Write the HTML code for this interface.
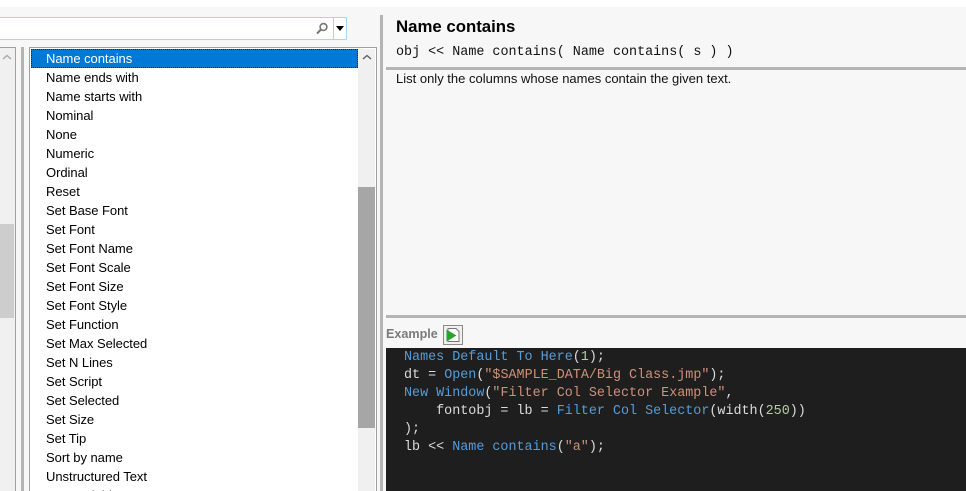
<!DOCTYPE html>
<html><head><meta charset="utf-8"><style>
html,body{margin:0;padding:0;width:966px;height:491px;overflow:hidden;background:#f7f7f7}
body{position:relative;font-family:"Liberation Sans",sans-serif;color:#111}
.a{position:absolute}
.it{position:absolute;left:46px;font-size:13px;line-height:19px;height:19px;white-space:nowrap;letter-spacing:-.04px;color:#000}
.m{font-family:"Liberation Mono",monospace;white-space:pre;position:absolute}
.c{font-size:13.4px;line-height:18px;left:404px;color:#dcdcdc}
.b{color:#569cd6}.s{color:#ce9178}.n{color:#b5cea8}
</style></head><body>
<div class="a" style="left:0;top:0;width:966px;height:7px;background:#fff"></div>
<div class="a" style="left:0;top:17px;width:346px;height:21px;background:#fff;border:1px solid #a9d6ee;border-left:0"></div>
<div class="a" style="left:333px;top:18px;width:1px;height:21px;background:#a9d6ee"></div>
<svg class="a" style="left:315px;top:21px" width="15" height="15" viewBox="0 0 15 15"><circle cx="8.5" cy="6" r="3.4" fill="none" stroke="#777" stroke-width="1.6"/><path d="M6 8.5L2 12.5" stroke="#777" stroke-width="2"/></svg>
<svg class="a" style="left:336px;top:26px" width="8" height="5"><path d="M0 0H8L4 5Z" fill="#000"/></svg>

<div class="a" style="left:0;top:47px;width:15px;height:444px;background:#f0f0f0;border-right:1px solid #a0a0a0;border-top:1px solid #a0a0a0"></div>
<div class="a" style="left:0;top:224px;width:14px;height:94px;background:#cdcdcd"></div>
<svg class="a" style="left:2px;top:54px" width="10" height="7"><path d="M1 5L5 1.5L9 5" fill="none" stroke="#a6a6a6" stroke-width="1.4"/></svg>
<div class="a" style="left:21px;top:47px;width:3px;height:444px;background:#b4b4b4"></div>

<div class="a" style="left:29px;top:47px;width:346px;height:444px;background:#fff;border:1px solid #a0a0a0;border-bottom:0"></div>
<div class="a" style="left:358px;top:49px;width:17px;height:442px;background:#f0f0f0"></div>
<div class="a" style="left:358px;top:187px;width:17px;height:241px;background:#a6a6a6"></div>
<svg class="a" style="left:362px;top:54px" width="10" height="7"><path d="M1 5L5 1.5L9 5" fill="none" stroke="#606060" stroke-width="1.4"/></svg>
<div class="a" style="left:31px;top:49px;width:325px;height:17px;background:#0078d7;border:1px dotted #00305a"></div>

<div class="it" style="top:49px;color:#fff">Name contains</div>
<div class="it" style="top:68px">Name ends with</div>
<div class="it" style="top:87px">Name starts with</div>
<div class="it" style="top:106px">Nominal</div>
<div class="it" style="top:125px">None</div>
<div class="it" style="top:144px">Numeric</div>
<div class="it" style="top:163px">Ordinal</div>
<div class="it" style="top:182px">Reset</div>
<div class="it" style="top:201px">Set Base Font</div>
<div class="it" style="top:220px">Set Font</div>
<div class="it" style="top:239px">Set Font Name</div>
<div class="it" style="top:258px">Set Font Scale</div>
<div class="it" style="top:277px">Set Font Size</div>
<div class="it" style="top:296px">Set Font Style</div>
<div class="it" style="top:315px">Set Function</div>
<div class="it" style="top:334px">Set Max Selected</div>
<div class="it" style="top:353px">Set N Lines</div>
<div class="it" style="top:372px">Set Script</div>
<div class="it" style="top:391px">Set Selected</div>
<div class="it" style="top:410px">Set Size</div>
<div class="it" style="top:429px">Set Tip</div>
<div class="it" style="top:448px">Sort by name</div>
<div class="it" style="top:467px">Unstructured Text</div>
<div class="it" style="top:486px">Use Variable</div>

<div class="a" style="left:380px;top:15px;width:3px;height:476px;background:#b4b4b4"></div>
<div class="a" style="left:396px;top:17px;font-size:16.8px;line-height:20px;font-weight:bold;color:#000;white-space:nowrap">Name contains</div>
<div class="m" style="left:396px;top:44px;font-size:13.4px;line-height:18px;color:#111">obj &lt;&lt; Name contains( Name contains( s ) )</div>
<div class="a" style="left:386px;top:67px;width:580px;height:3px;background:#b4b4b4"></div>
<div class="a" style="left:396px;top:70px;font-size:13px;line-height:18px;color:#111;white-space:nowrap">List only the columns whose names contain the given text.</div>
<div class="a" style="left:386px;top:315px;width:580px;height:3px;background:#b4b4b4"></div>
<div class="a" style="left:386px;top:326px;font-size:12.6px;line-height:17px;font-weight:bold;color:#7a7a7a">Example</div>
<svg class="a" style="left:443px;top:325px" width="20" height="20" viewBox="0 0 20 20"><rect x=".5" y=".5" width="19" height="19" fill="#f0f0f0" stroke="#8a8a8a"/><path d="M5 3.5H13L16 6.5V16.5H5Z" fill="#fff" stroke="#777"/><path d="M3.5 4.5L13.5 10.5L3.5 16.5Z" fill="#2aa52a"/></svg>
<div class="a" style="left:386px;top:348px;width:580px;height:143px;background:#1e1e1e"></div>
<div class="m c" style="top:349px"><span class="b">Names Default To Here</span>(<span class="n">1</span>);</div>
<div class="m c" style="top:367px">dt = <span class="b">Open</span>(<span class="s">"$SAMPLE_DATA/Big Class.jmp"</span>);</div>
<div class="m c" style="top:385px"><span class="b">New Window</span>(<span class="s">"Filter Col Selector Example"</span>,</div>
<div class="m c" style="top:403px">    fontobj = lb = <span class="b">Filter Col Selector</span>(width(<span class="n">250</span>))</div>
<div class="m c" style="top:421px">);</div>
<div class="m c" style="top:439px">lb &lt;&lt; <span class="b">Name contains</span>(<span class="s">"a"</span>);</div>
</body></html>
